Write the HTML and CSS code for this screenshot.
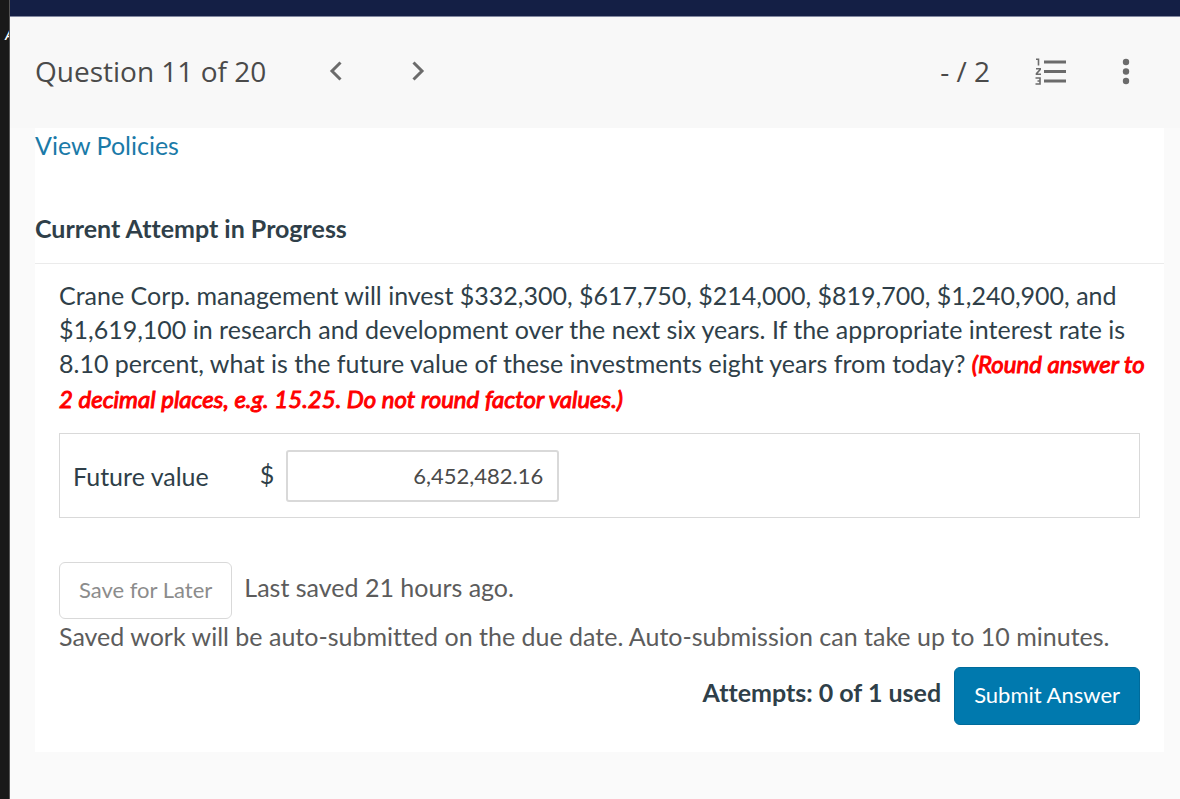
FILE: index.html
```
<!DOCTYPE html>
<html lang="en">
<head>
    <meta charset="UTF-8">
    <meta name="viewport" content="width=device-width, initial-scale=1.0">
    <title>Question 11 of 20</title>
    <link rel="stylesheet" href="styles.css">
</head>
<body>
    <aside class="side-strip">A</aside>

    <div class="page">
        <div class="top-bar"></div>

        <header class="question-header">
            <h1 class="question-title">Question 11 of 20</h1>
            <nav class="question-nav">
                <button type="button" class="icon-btn" aria-label="Previous question">
                    <svg width="14" height="20" viewBox="0 0 14 20"><path d="M11.5 1.500L3 10l8.500 8.500" /></svg>
                </button>
                <button type="button" class="icon-btn" aria-label="Next question">
                    <svg width="14" height="20" viewBox="0 0 14 20"><path d="M2.500 1.500L11 10l-8.500 8.500" /></svg>
                </button>
            </nav>
            <span class="score">- / 2</span>
            <button type="button" class="icon-btn list-btn" aria-label="Question list">
                <svg width="32" height="28" viewBox="0 0 32 28">
                    <path d="M9 5h22M9 14.500h22M9 24h22" />
                    <path class="digit" d="M1 2.300H3.500V8.500" />
                    <path class="digit" d="M1 11.700H5.200V12.500L1.500 16.600V17.300H6" />
                    <path class="digit" d="M0.500 21H5V27H0.500M2.500 24H5" />
                </svg>
            </button>
            <button type="button" class="icon-btn" aria-label="More options">
                <svg class="dots" width="8" height="28" viewBox="0 0 8 28">
                    <circle cx="4" cy="5" r="3.200" />
                    <circle cx="4" cy="14.500" r="3.200" />
                    <circle cx="4" cy="24" r="3.200" />
                </svg>
            </button>
        </header>

        <main class="content">
            <a href="#" class="policies">View Policies</a>
            <h2 class="attempt-title">Current Attempt in Progress</h2>

            <form class="question">
                <p class="question-text">Crane Corp. management will invest $332,300, $617,750, $214,000, $819,700, $1,240,900, and $1,619,100 in research and development over the next six years. If the appropriate interest rate is 8.10 percent, what is the future value of these investments eight years from today? <em class="hint">(Round answer to 2 decimal places, e.g. 15.25. Do not round factor values.)</em></p>

                <div class="answer-box">
                    <label for="futureValue">Future value</label>
                    <span class="currency">$</span>
                    <input type="text" id="futureValue" class="answer-input" value="6,452,482.16">
                </div>

                <div class="save-row">
                    <button type="button" class="btn save-btn">Save for Later</button>
                    <span>Last saved 21 hours ago.</span>
                </div>
                <p class="save-note">Saved work will be auto-submitted on the due date. Auto-submission can take up to 10 minutes.</p>

                <div class="submit-row">
                    <span class="attempts">Attempts: 0 of 1 used</span>
                    <button type="button" class="btn submit-btn">Submit Answer</button>
                </div>
            </form>
        </main>
    </div>
</body>
</html>
```
FILE: styles.css
```
:root {
    --navy: #141f45;
    --blue: #0079ae;
    --text: #2f3f49;
    --grey: #5c5c5c;
    --line: #d9d9d9;
}

* {
    box-sizing: border-box;
}

body {
    font-family: Lato, "Liberation Sans", sans-serif;
    font-size: 25px;
    font-variant-ligatures: none;
    line-height: 34px;
    color: var(--text);
    background-color: #fafafa;
    margin: 0;
    min-height: 100vh;
    display: flex;
}

h1, h2, p {
    margin: 0;
}

.side-strip {
    flex: none;
    width: 10px;
    padding: 17px 0 0 5px;
    background-color: #191919;
    border-right: 1px solid #555;
    color: #fff;
    font-size: 16px;
    font-style: italic;
    overflow: hidden;
}

.page {
    flex: 1;
    min-width: 0;
}

.top-bar {
    height: 17px;
    background-color: var(--navy);
    border-bottom: 1px solid #8288a0;
}

.question-header {
    display: flex;
    align-items: center;
    height: 111px;
    padding: 0 50px 4px 25px;
    background-color: #f8f8f8;
    color: #4a4a4a;
    font-family: "Open Sans", sans-serif;
    font-size: 28px;
}

.question-title {
    font-size: 28px;
    font-weight: 400;
}

.question-nav {
    display: flex;
    gap: 68px;
    margin-left: 63px;
}

.icon-btn {
    display: flex;
    padding: 0;
    border: none;
    background: none;
    cursor: pointer;
}

.icon-btn svg {
    fill: none;
    stroke: #6b6b6b;
    stroke-width: 3;
}

.icon-btn .dots {
    fill: #6b6b6b;
    stroke: none;
}

.icon-btn .digit {
    stroke-width: 1.6;
}

.score {
    margin-left: auto;
}

.list-btn {
    margin: 0 55px 0 45px;
}

.content {
    margin: 0 16px 0 25px;
    padding-bottom: 27px;
    background-color: #fff;
}

.policies {
    display: block;
    color: #1a7aa8;
    text-decoration: none;
}

.attempt-title {
    padding: 49px 0 18px;
    border-bottom: 1px solid #ebebeb;
    font-size: 25px;
    font-weight: 700;
}

.question {
    padding: 14px 24px 0;
}

.question-text {
    margin-right: -12px;
}

/* stroked regular italic, narrower than the bold cut */
.hint {
    color: #f00;
    font-size: 24px;
    font-weight: 400;
    -webkit-text-stroke: 1px #f00;
}

.answer-box {
    display: flex;
    align-items: center;
    height: 85px;
    margin: 17px 0 44px;
    padding: 0 13px;
    border: 1px solid var(--line);
}

.currency {
    margin: 0 12px 4px 51px;
}

.answer-input {
    width: 273px;
    height: 52px;
    padding: 0 14px;
    border: 2px solid var(--line);
    border-radius: 3px;
    background-color: #fff;
    color: #4a4a4a;
    font: inherit;
    font-size: 22px;
    text-align: right;
}

.save-row {
    display: flex;
    gap: 12px;
    color: var(--grey);
    line-height: 50px;
}

.save-note {
    color: var(--grey);
}

.btn {
    height: 58px;
    padding: 0 19px 3px;
    border-radius: 6px;
    font-family: inherit;
    font-size: 22px;
    cursor: pointer;
}

.save-btn {
    height: 57px;
    border: 1px solid var(--line);
    background-color: #fff;
    color: #8c8c8c;
}

.submit-row {
    display: flex;
    justify-content: flex-end;
    gap: 13px;
    margin-top: 14px;
    line-height: 50px;
}

.attempts {
    font-weight: 700;
}

.submit-btn {
    border: 1px solid #006b9b;
    background-color: var(--blue);
    color: #fff;
}
```
